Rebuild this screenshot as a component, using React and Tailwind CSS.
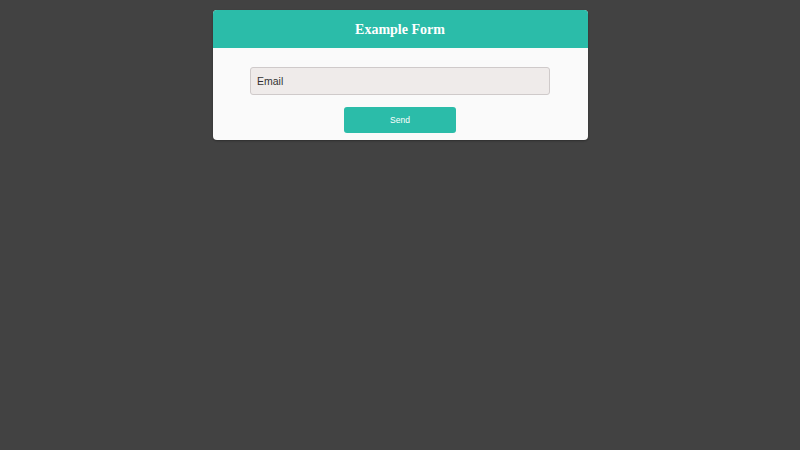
export default function App() {
  return (
    <div className="min-h-[450px] w-full bg-[#424242] pt-[10px]">
      <div className="mx-auto w-[375px] rounded-[4px] bg-[#fafafa] shadow-[0_1px_2px_rgba(0,0,0,0.3)]">
        <div className="flex h-[38px] items-center justify-center rounded-t-[4px] bg-[#2bbca9]">
          <h1 className="text-[14px] font-bold text-white [font-family:'Liberation_Serif',serif]">
            Example Form
          </h1>
        </div>
        <form
          className="flex flex-col items-center pt-[19px] pb-[7px]"
          onSubmit={(e) => e.preventDefault()}
        >
          <input
            type="email"
            placeholder="Email"
            className="h-[28px] w-[300px] rounded-[3px] border border-[#cfcaca] bg-[#efebea] px-[6px] text-[10.5px] text-[#333] outline-none placeholder:text-[#333] [font-family:'Liberation_Sans',Arial,sans-serif]"
          />
          <button
            type="submit"
            className="mt-[12px] h-[26px] w-[112px] rounded-[3px] bg-[#2bbca9] pt-[1px] text-[8.5px] text-white [font-family:'Liberation_Sans',Arial,sans-serif]"
          >
            Send
          </button>
        </form>
      </div>
    </div>
  );
}
